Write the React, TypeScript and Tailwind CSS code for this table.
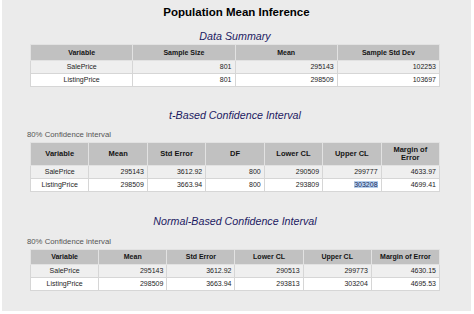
import React from 'react';

type Row = { name: string; values: string[]; highlight?: number };

const summaryHead = ['Variable', 'Sample Size', 'Mean', 'Sample Std Dev'];
const summaryRows: Row[] = [
  { name: 'SalePrice', values: ['801', '295143', '102253'] },
  { name: 'ListingPrice', values: ['801', '298509', '103697'] },
];

const tHead = ['Variable', 'Mean', 'Std Error', 'DF', 'Lower CL', 'Upper CL', 'Margin of Error'];
const tRows: Row[] = [
  { name: 'SalePrice', values: ['295143', '3612.92', '800', '290509', '299777', '4633.97'] },
  { name: 'ListingPrice', values: ['298509', '3663.94', '800', '293809', '303208', '4699.41'], highlight: 4 },
];

const normalHead = ['Variable', 'Mean', 'Std Error', 'Lower CL', 'Upper CL', 'Margin of Error'];
const normalRows: Row[] = [
  { name: 'SalePrice', values: ['295143', '3612.92', '290513', '299773', '4630.15'] },
  { name: 'ListingPrice', values: ['298509', '3663.94', '293813', '303204', '4695.53'] },
];

const StatTable = ({
  head,
  rows,
  headHeight,
  headClass = '',
}: {
  head: string[];
  rows: Row[];
  headHeight: string;
  headClass?: string;
}) => (
  <table className="w-[410px] table-fixed border-collapse text-[7px] leading-[8px] text-[#1e1e1e]">
    <thead>
      <tr className={`bg-[#c1c1c1] ${headHeight}`}>
        {head.map((h) => (
          <th key={h} className={`border border-[#e2e2e2] px-[3px] font-bold text-[#141414] ${headClass}`}>
            {h}
          </th>
        ))}
      </tr>
    </thead>
    <tbody>
      {rows.map((r, i) => (
        <tr key={r.name} className={`h-[13px] ${i === 0 ? 'bg-[#efefef]' : 'bg-white'}`}>
          <td className="border border-[#d6d6d6] text-center">{r.name}</td>
          {r.values.map((v, j) => (
            <td key={j} className="border border-[#d6d6d6] pr-[3px] text-right">
              {r.highlight === j ? <span className="bg-[#b5cfee] text-[#1b2c5c]">{v}</span> : v}
            </td>
          ))}
        </tr>
      ))}
    </tbody>
  </table>
);

const SectionTitle = ({ children, className = '' }: { children: React.ReactNode; className?: string }) => (
  <h2 className={`h-[13px] w-[410px] text-center text-[10.7px] leading-[13px] italic text-[#1c1a62] ${className}`}>
    {children}
  </h2>
);

const Note = ({ className = '' }: { className?: string }) => (
  <p className={`ml-[-3px] h-[10px] text-[7.75px] leading-[10px] text-[#555] ${className}`}>80% Confidence interval</p>
);

export default function App() {
  return (
    <div className="h-[314px] w-[474px] bg-white" style={{ fontFamily: '"Liberation Sans", Arial, sans-serif' }}>
      <div className="ml-[2px] flex h-[311px] w-[469px] flex-col bg-[#ebebeb] pl-[28px] pt-[5px]">
        <h1 className="ml-[-28px] h-[14px] w-[469px] text-center text-[11.5px] font-bold leading-[14px] text-black">
          Population Mean Inference
        </h1>

        <SectionTitle className="mt-[11px]">Data Summary</SectionTitle>
        <div className="mt-[1px]">
          <StatTable head={summaryHead} rows={summaryRows} headHeight="h-[16px]" />
        </div>

        <SectionTitle className="mt-[22px]">t-Based Confidence Interval</SectionTitle>
        <Note className="mt-[8px]" />
        <div className="mt-[2px]">
          <StatTable head={tHead} rows={tRows} headHeight="h-[23px]" headClass="text-[7.5px]" />
        </div>

        <SectionTitle className="mt-[23px]">Normal-Based Confidence Interval</SectionTitle>
        <Note className="mt-[9px]" />
        <div className="mt-[2px]">
          <StatTable head={normalHead} rows={normalRows} headHeight="h-[15px]" />
        </div>
      </div>
    </div>
  );
}
